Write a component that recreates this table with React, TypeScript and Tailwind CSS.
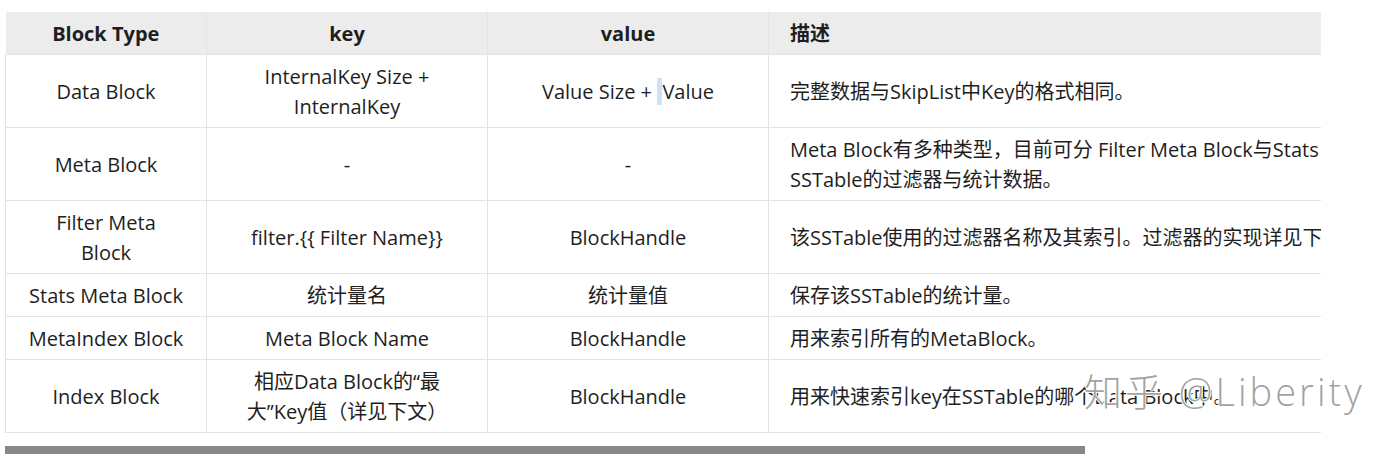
import React from "react";

const font = {
  fontFamily: '"Open Sans", "Noto Sans CJK SC", "Noto Sans", sans-serif',
};

type Row = {
  a: React.ReactNode;
  b: React.ReactNode;
  c: React.ReactNode;
  d: React.ReactNode;
};

const rows: Row[] = [
  {
    a: "Data Block",
    b: (
      <>
        InternalKey Size +<br />
        InternalKey
      </>
    ),
    c: (
      <>
        Value Size +{" "}
        <span className="bg-[#cfe2f3]">{"\u00a0"}</span>Value
      </>
    ),
    d: "完整数据与SkipList中Key的格式相同。",
  },
  {
    a: "Meta Block",
    b: "-",
    c: "-",
    d: (
      <>
        Meta Block有多种类型，目前可分 Filter Meta Block与Stats Meta Block，分别存储
        <br />
        SSTable的过滤器与统计数据。
      </>
    ),
  },
  {
    a: (
      <>
        Filter Meta
        <br />
        Block
      </>
    ),
    b: "filter.{{ Filter Name}}",
    c: "BlockHandle",
    d: "该SSTable使用的过滤器名称及其索引。过滤器的实现详见下文。",
  },
  {
    a: "Stats Meta Block",
    b: "统计量名",
    c: "统计量值",
    d: "保存该SSTable的统计量。",
  },
  {
    a: "MetaIndex Block",
    b: "Meta Block Name",
    c: "BlockHandle",
    d: "用来索引所有的MetaBlock。",
  },
  {
    a: "Index Block",
    b: (
      <>
        相应Data Block的“最
        <br />
        大”Key值（详见下文）
      </>
    ),
    c: "BlockHandle",
    d: "用来快速索引key在SSTable的哪个Data Block中。",
  },
];

export default function App() {
  return (
    <div
      className="relative w-[1398px] h-[455px] overflow-hidden bg-white text-[#1e1e1e] text-[20px]"
      style={font}
    >
      <div className="pt-[12px] pl-[5px]">
        <div className="w-[1316px] overflow-hidden">
          <table className="table-fixed border-collapse w-[1604px] leading-[30px]">
            <colgroup>
              <col className="w-[201px]" />
              <col className="w-[281px]" />
              <col className="w-[281px]" />
              <col className="w-[841px]" />
            </colgroup>
            <thead>
              <tr className="bg-[#ececec]">
                <th className="pt-[7px] pb-[5px] px-[6px] font-bold text-center border-r border-[#e3e3e3] whitespace-nowrap">
                  Block Type
                </th>
                <th className="pt-[7px] pb-[5px] px-[6px] font-bold text-center border-r border-[#e3e3e3]">
                  key
                </th>
                <th className="pt-[7px] pb-[5px] px-[6px] font-bold text-center border-r border-[#e3e3e3]">
                  value
                </th>
                <th className="pt-[7px] pb-[5px] pl-[21px] pr-[20px] font-bold text-left">
                  描述
                </th>
              </tr>
            </thead>
            <tbody>
              {rows.map((r, i) => (
                <tr key={i} className="border-t border-b border-[#e3e3e3]">
                  <td className="pt-[7px] pb-[5px] px-[4px] text-center align-middle whitespace-nowrap border-l border-r border-[#e3e3e3]">
                    {r.a}
                  </td>
                  <td className="pt-[7px] pb-[5px] px-[4px] text-center align-middle whitespace-nowrap border-r border-[#e3e3e3]">
                    {r.b}
                  </td>
                  <td className="pt-[7px] pb-[5px] px-[4px] text-center align-middle whitespace-nowrap border-r border-[#e3e3e3]">
                    {r.c}
                  </td>
                  <td className="pt-[7px] pb-[5px] pl-[21px] pr-[20px] text-left align-middle whitespace-nowrap">
                    {r.d}
                  </td>
                </tr>
              ))}
            </tbody>
          </table>
        </div>
        <div className="mt-[13px] w-[1080px] h-[8px] bg-[#87878c]" />
      </div>
      <div
        className="absolute left-[1084px] top-[367px] text-[38px] leading-[48px] tracking-[3px] whitespace-nowrap text-[rgba(145,145,145,0.85)] font-light"
        style={{
          textShadow:
            "1px 0 0 #fff, -1px 0 0 #fff, 0 1px 0 #fff, 0 -1px 0 #fff",
        }}
      >
        知乎 @Liberity
      </div>
    </div>
  );
}
